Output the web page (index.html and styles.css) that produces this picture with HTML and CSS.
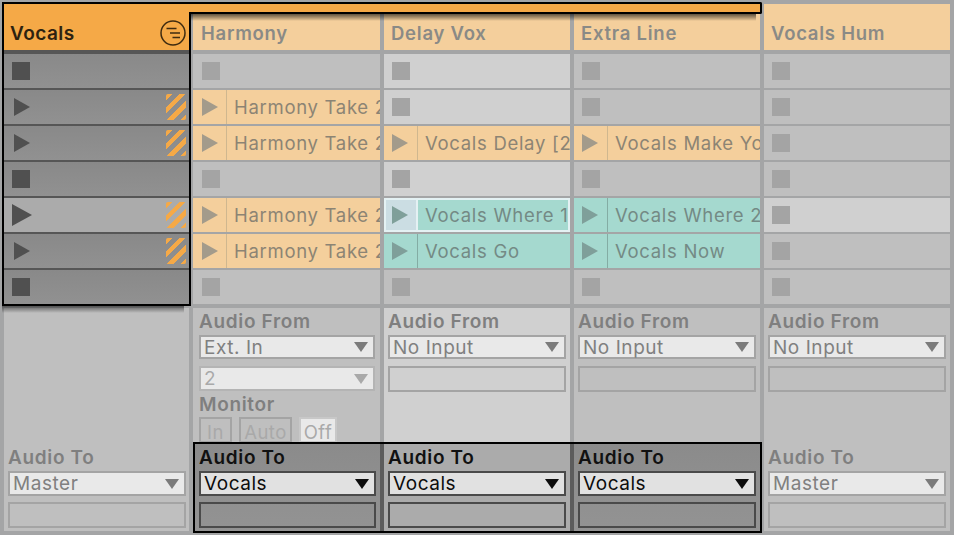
FILE: index.html
```html
<!DOCTYPE html>
<html lang="en">
<head>
<meta charset="utf-8">
<title>Session View</title>
<link rel="stylesheet" href="styles.css">
</head>
<body>
<main class="session">
  <div class="group-strip"></div>

  <section class="stack stack-group">
    <header class="head head-group"><span>Vocals</span>
      <svg class="fold" viewBox="0 0 28 28" width="28" height="28"><circle cx="14" cy="14" r="12" fill="none" stroke="#3f2b10" stroke-width="1.5"/><path d="M7.5 9.5H17.5M11 14H21M13.5 18.5H21" fill="none" stroke="#3f2b10" stroke-width="1.6"/></svg>
    </header>
    <div class="slot"><i class="stop"></i></div>
    <div class="slot"><i class="play"></i><i class="hatch"></i></div>
    <div class="slot"><i class="play"></i><i class="hatch"></i></div>
    <div class="slot"><i class="stop"></i></div>
    <div class="slot slot-sel"><i class="play play-big"></i><i class="hatch"></i></div>
    <div class="slot"><i class="play"></i><i class="hatch"></i></div>
    <div class="slot"><i class="stop"></i></div>
  </section>

  <section class="stack first">
    <header class="head"><span>Harmony</span></header>
    <div class="slot"><i class="stop"></i></div>
    <div class="clip"><div class="cp"><i class="play"></i></div><div class="cn">Harmony Take 2</div></div>
    <div class="clip"><div class="cp"><i class="play"></i></div><div class="cn">Harmony Take 2</div></div>
    <div class="slot"><i class="stop"></i></div>
    <div class="clip"><div class="cp"><i class="play"></i></div><div class="cn">Harmony Take 2</div></div>
    <div class="clip"><div class="cp"><i class="play"></i></div><div class="cn">Harmony Take 2</div></div>
    <div class="slot"><i class="stop"></i></div>
  </section>

  <section class="stack">
    <header class="head"><span>Delay Vox</span></header>
    <div class="slot light"><i class="stop"></i></div>
    <div class="slot light"><i class="stop"></i></div>
    <div class="clip"><div class="cp"><i class="play"></i></div><div class="cn">Vocals Delay [2]</div></div>
    <div class="slot light"><i class="stop"></i></div>
    <div class="clip teal picked"><div class="cp"><i class="play"></i></div><div class="cn">Vocals Where 1</div></div>
    <div class="clip teal"><div class="cp"><i class="play"></i></div><div class="cn">Vocals Go</div></div>
    <div class="slot"><i class="stop"></i></div>
  </section>

  <section class="stack">
    <header class="head"><span>Extra Line</span></header>
    <div class="slot"><i class="stop"></i></div>
    <div class="slot"><i class="stop"></i></div>
    <div class="clip"><div class="cp"><i class="play"></i></div><div class="cn">Vocals Make You</div></div>
    <div class="slot"><i class="stop"></i></div>
    <div class="clip teal"><div class="cp"><i class="play"></i></div><div class="cn">Vocals Where 2</div></div>
    <div class="clip teal"><div class="cp"><i class="play"></i></div><div class="cn">Vocals Now</div></div>
    <div class="slot"><i class="stop"></i></div>
  </section>

  <section class="stack">
    <header class="head"><span>Vocals Hum</span></header>
    <div class="slot"><i class="stop"></i></div>
    <div class="slot"><i class="stop"></i></div>
    <div class="slot"><i class="stop"></i></div>
    <div class="slot"><i class="stop"></i></div>
    <div class="slot light"><i class="stop"></i></div>
    <div class="slot"><i class="stop"></i></div>
    <div class="slot"><i class="stop"></i></div>
  </section>

  <div class="mixer"></div>

  <div class="mixer mixer-first">
    <div class="label">Audio From</div>
    <div class="sel"><span>Ext. In</span><i class="arrow"></i></div>
    <div class="sel sel-faint"><span>2</span><i class="arrow"></i></div>
    <div class="label label-mon">Monitor</div>
    <div class="mon"><span class="btn btn-in">In</span><span class="btn btn-auto">Auto</span><span class="btn btn-off">Off</span></div>
  </div>

  <div class="mixer mixer-light">
    <div class="label">Audio From</div>
    <div class="sel"><span>No Input</span><i class="arrow"></i></div>
    <div class="field"></div>
  </div>

  <div class="mixer">
    <div class="label">Audio From</div>
    <div class="sel"><span>No Input</span><i class="arrow"></i></div>
    <div class="field"></div>
  </div>

  <div class="mixer">
    <div class="label">Audio From</div>
    <div class="sel"><span>No Input</span><i class="arrow"></i></div>
    <div class="field"></div>
  </div>

  <div class="to">
    <div class="label">Audio To</div>
    <div class="sel sel-to"><span>Master</span><i class="arrow"></i></div>
    <div class="field field-to"></div>
  </div>

  <div class="to-group">
    <div class="to to-dark w1">
      <div class="label">Audio To</div>
      <div class="sel sel-to"><span>Vocals</span><i class="arrow"></i></div>
      <div class="field field-to"></div>
    </div>
    <div class="to to-dark to-mid w2">
      <div class="label">Audio To</div>
      <div class="sel sel-to"><span>Vocals</span><i class="arrow"></i></div>
      <div class="field field-to"></div>
    </div>
    <div class="to to-dark w2">
      <div class="label">Audio To</div>
      <div class="sel sel-to"><span>Vocals</span><i class="arrow"></i></div>
      <div class="field field-to"></div>
    </div>
  </div>

  <div class="to">
    <div class="label">Audio To</div>
    <div class="sel sel-to"><span>Master</span><i class="arrow"></i></div>
    <div class="field field-to"></div>
  </div>
</main>
</body>
</html>
```
FILE: styles.css
```css
html, body { margin: 0; height: 535px; overflow: hidden; background: #a4a5a6; }
body { font-family: "Inter", "Liberation Sans", sans-serif; }
* { box-sizing: border-box; }
i { display: block; }

.session {
  position: relative;
  display: grid;
  grid-template-columns: 185px 187px 186px 186px 186px;
  grid-template-rows: 300px 138px 91px;
  column-gap: 4px;
  padding: 4px 4px 0;
  height: 535px;
}

.group-strip {
  position: absolute;
  left: 189px;
  top: 2px;
  width: 573px;
  height: 12px;
  background: #f5a947;
  border: 2px solid #000;
  border-left: 0;
  border-radius: 0 2px 2px 0;
  z-index: 3;
}
.group-strip::after {
  content: "";
  position: absolute;
  left: 0;
  right: 4px;
  top: 10px;
  height: 7px;
  background: linear-gradient(rgba(0, 0, 0, .6), rgba(0, 0, 0, 0));
}

/* clip stacks */
.stack { display: flex; flex-direction: column; gap: 2px; background: #a4a5a6; overflow: hidden; }
.stack-group {
  background: #565656;
  overflow: visible;
  outline: 2px solid #000;
  position: relative;
  z-index: 2;
}
.stack-group::after {
  content: "";
  position: absolute;
  left: -2px;
  right: 5px;
  top: 302px;
  height: 7px;
  background: linear-gradient(rgba(0, 0, 0, .5), rgba(0, 0, 0, 0));
}
.head {
  flex: 0 0 46px;
  margin-bottom: 2px;
  display: flex;
  align-items: center;
  justify-content: space-between;
  padding: 12px 2px 0 7px;
  background: #f4cf9c;
  color: #8a8a86;
  font-size: 18.5px;
  font-weight: 600;
  letter-spacing: .75px;
  white-space: nowrap;
}
.head-group { background: #f5a947; color: #2e2210; padding-left: 6px; font-size: 19px; letter-spacing: .45px; }
.fold { margin-right: 0; }
.first .head { padding-left: 8px; }

.slot {
  flex: 0 0 34px;
  display: flex;
  align-items: center;
  justify-content: space-between;
  padding: 0 3px 0 8px;
  background: #bfbfbf;
}
.first .slot { padding-left: 9px; }
.light { background: #d0d0d0; }
.stack-group .slot { background: linear-gradient(#898989, #919191); }
.stack-group .slot-sel { background: #ababab; }

.stop { width: 18px; height: 18px; background: #a4a4a4; }
.stack-group .stop { background: #505050; }
.play {
  width: 0;
  height: 0;
  border-style: solid;
  border-width: 9px 0 9px 16px;
  border-color: transparent transparent transparent #a39b8b;
}
.stack-group .play { border-left-color: #505050; margin-left: 2px; }
.stack-group .play-big { border-width: 11px 0 11px 20px; margin-left: 0; }
.hatch {
  width: 20px;
  height: 26px;
  border-radius: 2px;
  background: repeating-linear-gradient(135deg, #f5a947 0 4.5px, transparent 4.5px 9.5px);
}

.clip { flex: 0 0 34px; height: 34px; display: flex; background: #f4cf9c; color: #8c8474; }
.cp { flex: 0 0 34px; display: flex; align-items: center; padding-left: 8px; border-right: 1px solid #cfb78f; }
.first .cp { padding-left: 9px; }
.cn {
  flex: 1;
  min-width: 0;
  height: 34px;
  overflow: hidden;
  white-space: nowrap;
  padding: 1px 0 0 7px;
  font-size: 18.5px;
  line-height: 33px;
  letter-spacing: .7px;
}
.teal { background: #a5d9cf; color: #748a85; }
.teal .cp { border-right-color: #84aca4; }
.teal .play { border-left-color: #7f9f9a; }
.picked { box-shadow: inset 0 0 0 2px #e4f1f3; }
.picked .cp { background: #cbdde3; border-right: 2px solid #e4f1f3; margin: 2px 0 2px 2px; padding-left: 6px; flex-basis: 32px; }

/* mixer */
.mixer {
  margin-top: 4px;
  height: 134px;
  padding: 4px 0 0 4px;
  background: #bfbfbf;
  overflow: hidden;
}
.mixer-first { padding-left: 6px; }
.mixer-light { background: #d0d0d0; }

.label {
  height: 19px;
  font-size: 19px;
  line-height: 19px;
  font-weight: 600;
  letter-spacing: .65px;
  color: #7f7f7f;
  white-space: nowrap;
}
.mixer .label:first-child { margin-bottom: 4px; }
.label-mon { margin-top: 4px; margin-bottom: 3px; }

.sel {
  width: 178px;
  height: 24px;
  display: flex;
  align-items: center;
  justify-content: space-between;
  padding: 0 5px 0 3px;
  border: 2px solid #a4a4a4;
  background: #e9e9e9;
  color: #808080;
  font-size: 19px;
  letter-spacing: .55px;
}
.mixer-first .sel { width: 176px; }
.arrow {
  width: 0;
  height: 0;
  border-style: solid;
  border-width: 10px 7px 0;
  border-color: #7b7b7b transparent transparent;
}
.sel-faint { margin-top: 7px; height: 25px; color: #a9a9a9; border-color: #b4b4b4; }
.sel-faint .arrow { border-top-color: #a9a9a9; }
.field {
  width: 178px;
  height: 26px;
  margin-top: 7px;
  border: 2px solid #a4a4a4;
}

.mon { display: flex; gap: 7px; }
.btn {
  height: 26px;
  display: flex;
  justify-content: center;
  border: 2px solid #a4a4a4;
  color: #a9a9a9;
  font-size: 18.5px;
  line-height: 26px;
  letter-spacing: .5px;
}
.btn-in { width: 33px; }
.btn-auto { width: 53px; }
.btn-off { width: 38px; background: #e9e9e9; border-color: #c8c8c8; }

/* audio to */
.to {
  height: 89px;
  display: flex;
  flex-direction: column;
  justify-content: flex-end;
  padding: 0 0 3px 4px;
  background: #bfbfbf;
}
.to .label { margin-bottom: 4px; }
.sel-to { height: 25px; }
.field-to { margin-top: 6px; }

.to-group {
  grid-column: 2 / 5;
  height: 91px;
  margin-right: -2px;
  display: flex;
  gap: 4px;
  border: 2px solid #000;
  background: #5c5c5c;
}
.w1 { flex: 0 0 185px; }
.w2 { flex: 0 0 186px; }
.w1 .sel, .w1 .field { width: 177px; }
.to-dark { height: 87px; background: linear-gradient(#8b8b8b, #939393); }
.to-mid { background: #ababab; }
.to-dark .label { color: #111; }
.to-dark .sel { border-color: #4a4a4a; background: #e1e1e1; color: #0c0c0c; }
.to-dark .arrow { border-top-color: #0c0c0c; }
.to-dark .field { border-color: #4a4a4a; }
```
